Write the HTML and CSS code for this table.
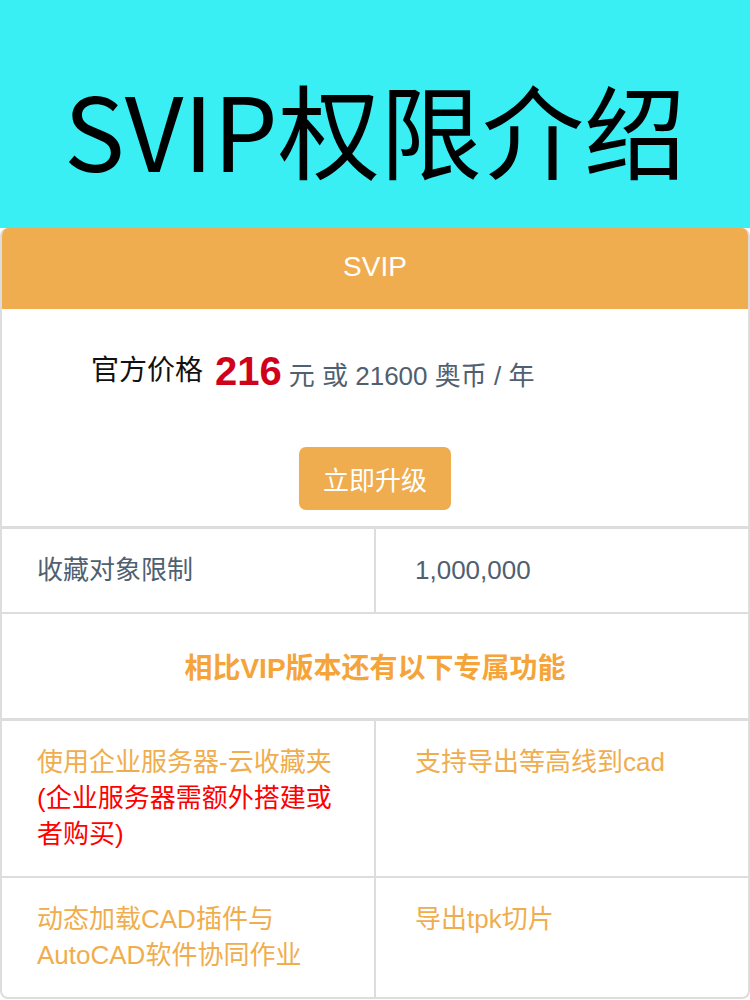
FILE: index.html
```html
<!DOCTYPE html>
<html lang="zh-CN">
<head>
<meta charset="utf-8">
<title>SVIP权限介绍</title>
<link rel="stylesheet" href="styles.css">
</head>
<body>
<header class="banner">
  <h1 class="banner-title">SVIP权限介绍</h1>
</header>
<section class="card">
  <div class="card-head">SVIP</div>
  <div class="price-block">
    <p class="price-line">
      <span class="price-label">官方价格</span>
      <span class="price-num">216</span>
      <span class="price-unit">元 或 21600 奥币 / 年</span>
    </p>
    <div class="btn-wrap"><button class="btn-upgrade">立即升级</button></div>
  </div>
  <div class="table">
    <div class="row">
      <div class="cell cell-left text-gray">收藏对象限制</div>
      <div class="cell text-gray">1,000,000</div>
    </div>
    <div class="row-full">相比VIP版本还有以下专属功能</div>
    <div class="row">
      <div class="cell cell-left text-orange">使用企业服务器-云收藏夹<span class="text-red">(企业服务器需额外搭建或者购买)</span></div>
      <div class="cell text-orange">支持导出等高线到cad</div>
    </div>
    <div class="row row-last">
      <div class="cell cell-left text-orange">动态加载CAD插件与AutoCAD软件协同作业</div>
      <div class="cell text-orange">导出tpk切片</div>
    </div>
  </div>
</section>
</body>
</html>
```

FILE: styles.css
```css
* { box-sizing: border-box; }
html, body { margin: 0; padding: 0; background: #fff; }
body {
  width: 750px;
  font-family: "Liberation Sans", "Noto Sans CJK SC", sans-serif;
}
.banner {
  height: 228px;
  background: #39eff3;
  padding-top: 78px;
}
.banner-title {
  margin: 0;
  font-family: "Noto Sans CJK SC", sans-serif;
  font-weight: 400;
  font-size: 102px;
  line-height: 100px;
  color: #000;
  text-align: center;
}
.card {
  height: 771px;
  border: 2px solid #dddddd;
  border-top: none;
  border-radius: 8px;
  overflow: hidden;
  display: flex;
  flex-direction: column;
}
.card-head {
  height: 82px;
  margin: 0 -2px;
  background: #efad4f;
  color: #fff;
  font-size: 28px;
  display: flex;
  align-items: center;
  justify-content: center;
  padding-bottom: 2px;
}
.price-block {
  height: 220px;
  padding-top: 40px;
}
.price-line {
  margin: 0;
  padding-left: 89px;
  display: flex;
  align-items: baseline;
  gap: 7px;
}
.price-label {
  font-size: 28px;
  color: #111;
  position: relative;
  top: -5px;
}
.price-num {
  font-size: 40px;
  font-weight: 700;
  color: #d0021b;
  margin-left: 5px;
}
.price-unit {
  font-size: 26px;
  color: #4f6070;
}
.btn-wrap {
  margin-top: 53px;
  display: flex;
  justify-content: center;
}
.btn-upgrade {
  width: 152px;
  height: 63px;
  border: none;
  border-radius: 7px;
  background: #efad4f;
  color: #fff;
  font-family: "Liberation Sans", "Noto Sans CJK SC", sans-serif;
  font-size: 26px;
  padding: 0;
}
.table {
  border-top: 3px solid #dddddd;
  flex: 1;
  display: flex;
  flex-direction: column;
}
.row {
  display: grid;
  grid-template-columns: 374px 1fr;
  border-bottom: 2px solid #dddddd;
}
.row-last { border-bottom: none; flex: 1; }
.cell {
  padding: 23px 36px 24px 35px;
  font-size: 26px;
  line-height: 36px;
}
.cell-left { border-right: 2px solid #dddddd; }
.cell-left + .cell { padding-left: 39px; }
.text-gray { color: #4f6070; }
.text-orange { color: #f0ad4e; }
.text-red { color: #ff0000; }
.row-full {
  height: 107px;
  border-bottom: 3px solid #dddddd;
  display: flex;
  align-items: center;
  justify-content: center;
  font-size: 28px;
  font-weight: 700;
  color: #f5a43a;
}
```
